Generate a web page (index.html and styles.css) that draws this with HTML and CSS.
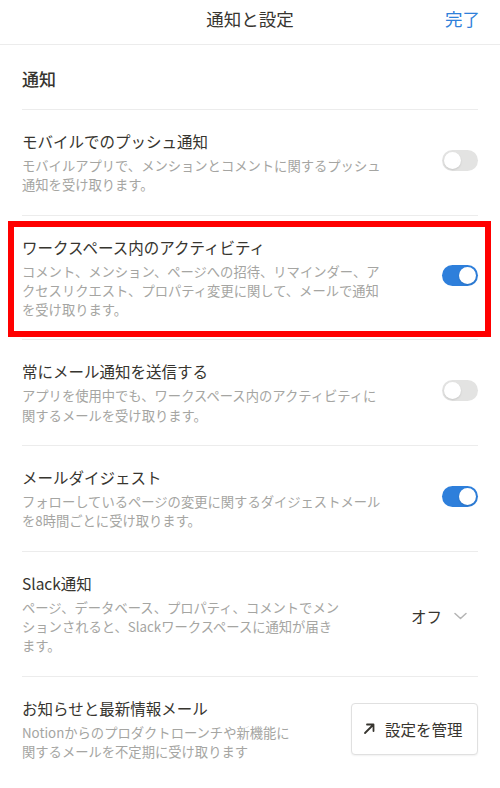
FILE: index.html
```html
<!DOCTYPE html>
<html lang="ja">
<head>
    <meta charset="UTF-8">
    <meta name="viewport" content="width=device-width, initial-scale=1.0">
    <title>通知と設定</title>
    <link rel="stylesheet" href="styles.css">
</head>
<body>

<!-- Top bar -->
<div class="topbar">
    <span class="topbar-title">通知と設定</span>
    <span class="topbar-done">完了</span>
</div>

<div class="content">

    <h2 class="section-title">通知</h2>

    <div class="setting-row">
        <div class="setting-text">
            <div class="setting-name">モバイルでのプッシュ通知</div>
            <div class="setting-desc">モバイルアプリで、メンションとコメントに関するプッシュ<br>通知を受け取ります。</div>
        </div>
        <div class="toggle"><span class="knob"></span></div>
    </div>

    <div class="setting-row highlighted">
        <div class="setting-text">
            <div class="setting-name">ワークスペース内のアクティビティ</div>
            <div class="setting-desc">コメント、メンション、ページへの招待、リマインダー、ア<br>クセスリクエスト、プロパティ変更に関して、メールで通知<br>を受け取ります。</div>
        </div>
        <div class="toggle on"><span class="knob"></span></div>
    </div>

    <div class="setting-row">
        <div class="setting-text">
            <div class="setting-name">常にメール通知を送信する</div>
            <div class="setting-desc">アプリを使用中でも、ワークスペース内のアクティビティに<br>関するメールを受け取ります。</div>
        </div>
        <div class="toggle"><span class="knob"></span></div>
    </div>

    <div class="setting-row">
        <div class="setting-text">
            <div class="setting-name">メールダイジェスト</div>
            <div class="setting-desc">フォローしているページの変更に関するダイジェストメール<br>を8時間ごとに受け取ります。</div>
        </div>
        <div class="toggle on"><span class="knob"></span></div>
    </div>

    <div class="setting-row">
        <div class="setting-text">
            <div class="setting-name">Slack通知</div>
            <div class="setting-desc">ページ、データベース、プロパティ、コメントでメン<br>ションされると、Slackワークスペースに通知が届き<br>ます。</div>
        </div>
        <div class="select">
            <span>オフ</span>
            <svg class="chevron" width="13" height="8" viewBox="0 0 13 8">
                <polyline points="1,1.5 6.5,6.5 12,1.5" fill="none" stroke="#b4b4b4" stroke-width="1.5" stroke-linecap="round" stroke-linejoin="round"/>
            </svg>
        </div>
    </div>

    <div class="setting-row last">
        <div class="setting-text">
            <div class="setting-name">お知らせと最新情報メール</div>
            <div class="setting-desc">Notionからのプロダクトローンチや新機能に<br>関するメールを不定期に受け取ります</div>
        </div>
        <button class="manage-button">
            <svg width="13" height="13" viewBox="0 0 13 13">
                <path d="M2 11 L10.5 2.5 M4 2.5 H10.5 V9" fill="none" stroke="#37352f" stroke-width="1.8" stroke-linecap="round" stroke-linejoin="round"/>
            </svg>
            設定を管理
        </button>
    </div>

</div>

</body>
</html>
```

FILE: styles.css
```css
/* General Styling */
body {
    font-family: "Noto Sans CJK JP", "Noto Sans", sans-serif;
    margin: 0;
    padding: 0;
    background-color: #ffffff;
    color: #37352f;
}

/* Top bar */
.topbar {
    height: 45px;
    box-sizing: border-box;
    border-bottom: 1px solid #ececec;
    display: flex;
    justify-content: center;
    align-items: flex-start;
    padding-top: 7px;
    position: relative;
}

.topbar-title {
    font-size: 17.5px;
    line-height: 24px;
    color: #37352f;
}

.topbar-done {
    position: absolute;
    right: 20px;
    top: 7px;
    font-size: 17.5px;
    line-height: 24px;
    color: #2e80da;
}

.content {
    padding: 0 22px;
}

.section-title {
    margin: 0;
    padding: 22px 0 18px;
    font-size: 17px;
    line-height: 24px;
    font-weight: 500;
    border-bottom: 1px solid #ececec;
}

/* Setting rows */
.setting-row {
    display: flex;
    align-items: center;
    padding: 20px 0 20px;
    border-bottom: 1px solid #ececec;
    position: relative;
}

.setting-row.last {
    border-bottom: none;
}

.setting-row.highlighted::after {
    content: "";
    position: absolute;
    top: 5px;
    bottom: 2px;
    left: -14px;
    right: -13px;
    border: 6px solid #ff0000;
    pointer-events: none;
}

.setting-text {
    flex: 1;
}

.setting-name {
    font-size: 15.5px;
    line-height: 22px;
    margin-bottom: 4px;
    color: #37352f;
}

.setting-desc {
    font-size: 13.3px;
    line-height: 19.3px;
    color: #a5a5a2;
    white-space: nowrap;
}

/* Toggle */
.toggle {
    width: 36px;
    height: 21px;
    border-radius: 11px;
    background-color: #e3e3e2;
    position: relative;
    flex-shrink: 0;
    margin-bottom: 4px;
}

.toggle .knob {
    position: absolute;
    top: 2px;
    left: 2px;
    width: 17px;
    height: 17px;
    border-radius: 50%;
    background-color: #ffffff;
    box-shadow: 0 1px 2px rgba(0, 0, 0, 0.12);
}

.toggle.on {
    background-color: #2e7fdb;
}

.toggle.on .knob {
    left: 17px;
}

/* Select */
.select {
    display: flex;
    align-items: center;
    gap: 12px;
    font-size: 15.5px;
    color: #37352f;
    margin-right: 11px;
    margin-top: 4px;
}

/* Manage button */
.manage-button {
    display: flex;
    align-items: center;
    gap: 9px;
    width: 127px;
    height: 52px;
    padding: 0 0 0 11px;
    box-sizing: border-box;
    border: 1px solid #e0e0e0;
    border-radius: 4px;
    background-color: #ffffff;
    box-shadow: 0 1px 2px rgba(0, 0, 0, 0.06);
    font-family: inherit;
    font-size: 15.5px;
    color: #37352f;
    cursor: pointer;
}
```
